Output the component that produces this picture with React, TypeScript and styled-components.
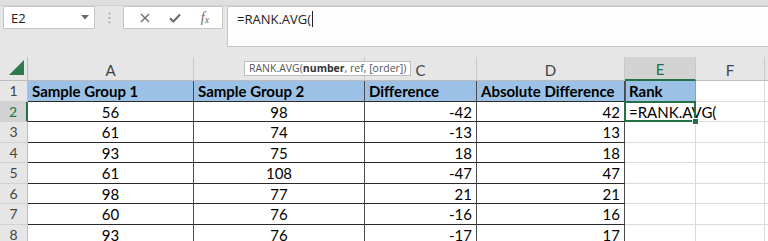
import { Fragment } from "react";
import styled, { createGlobalStyle } from "styled-components";

const GlobalStyle = createGlobalStyle`
  html, body {
    margin: 0;
    padding: 0;
  }
  body {
    background: #e6e6e6;
    font-family: Lato, "Liberation Sans", sans-serif;
    overflow: hidden;
  }
`;

const Window = styled.div`
  width: 768px;
  height: 241px;
  overflow: hidden;
  background: #e6e6e6;
`;

const FormulaBar = styled.div`
  display: flex;
  align-items: flex-start;
  height: 57px;
  box-sizing: border-box;
  padding: 6px 0 0 3px;
  background: linear-gradient(#dfdfdf 0, #dfdfdf 5px, #d2d2d2 5px, #d2d2d2 6px, #e6e6e6 6px);
  font-family: "Open Sans", "Noto Sans", sans-serif;
`;

const NameBox = styled.div`
  display: flex;
  align-items: center;
  justify-content: space-between;
  box-sizing: border-box;
  width: 92px;
  height: 23px;
  padding: 0 5px 0 7px;
  background: #fff;
  border: 1px solid #c6c6c6;
  font-size: 13px;
  color: #222;
`;

const Grip = styled.div`
  display: flex;
  align-items: center;
  justify-content: center;
  width: 28px;
  height: 23px;
`;

const FnBox = styled.div`
  display: flex;
  align-items: center;
  justify-content: space-around;
  box-sizing: border-box;
  width: 100px;
  height: 23px;
  padding: 0 2px 0 6px;
  background: #fff;
  border: 1px solid #c6c6c6;
`;

const FnButton = styled.span`
  display: flex;
  align-items: center;
  justify-content: center;
  width: 28px;
  height: 20px;
  color: #6b6b6b;
`;

const FxLabel = styled.span`
  font-family: "Liberation Serif", serif;
  font-style: italic;
  font-size: 14px;
  color: #6b6b6b;
  sub {
    font-size: 10px;
    vertical-align: -1px;
  }
`;

const FormulaInput = styled.div`
  flex: 1;
  display: flex;
  align-items: flex-start;
  box-sizing: border-box;
  height: 41px;
  margin-left: 4px;
  padding: 3px 9px;
  background: #fdfdfd;
  border: 1px solid #c6c6c6;
  border-right: none;
  font-size: 13px;
  color: #222;
  line-height: 18px;
`;

const Caret = styled.span`
  display: inline-block;
  width: 1px;
  height: 16px;
  margin: 1px 0 0 1px;
  background: #222;
`;

const Sheet = styled.div`
  position: relative;
  display: grid;
  grid-template-columns: 28px 166px 171px 112px 148px 71px 69px 1fr;
  grid-template-rows: 24px;
  grid-auto-rows: 20.5px;
  background: #fff;
`;

const Corner = styled.div`
  display: flex;
  align-items: flex-end;
  justify-content: flex-end;
  box-sizing: border-box;
  padding: 0 3px 5px 0;
  background: #e6e6e6;
  border-right: 1px solid #bdbdbd;
  border-bottom: 1px solid #bdbdbd;
`;

const ColHead = styled.div<{ $active?: boolean }>`
  display: flex;
  align-items: center;
  justify-content: center;
  box-sizing: border-box;
  padding-top: 2px;
  background: ${(p) => (p.$active ? "#d3d3d3" : "#e6e6e6")};
  border-right: 1px solid #c8c8c8;
  border-bottom: ${(p) => (p.$active ? "2px solid #217346" : "1px solid #bdbdbd")};
  color: ${(p) => (p.$active ? "#217346" : "#444")};
  font-size: 15px;
`;

const RowHead = styled.div<{ $active?: boolean }>`
  display: flex;
  align-items: center;
  justify-content: center;
  box-sizing: border-box;
  background: ${(p) => (p.$active ? "#d3d3d3" : "#e6e6e6")};
  border-right: ${(p) => (p.$active ? "2px solid #217346" : "1px solid #bdbdbd")};
  border-bottom: 1px solid #d0d0d0;
  color: ${(p) => (p.$active ? "#217346" : "#444")};
  font-size: 14px;
`;

const Cell = styled.div<{
  $table?: boolean;
  $fill?: boolean;
  $bold?: boolean;
  $align?: "left" | "center" | "right";
}>`
  box-sizing: border-box;
  padding: 0 4px;
  background: ${(p) => (p.$fill ? "#9bc2e6" : "#fff")};
  border-right: 1px solid ${(p) => (p.$table ? "#4a4a4a" : "#dadada")};
  border-bottom: 1px solid ${(p) => (p.$table ? "#2a2a2a" : "#dadada")};
  text-align: ${(p) => p.$align || "left"};
  font-size: 15px;
  font-weight: ${(p) => (p.$bold ? 700 : 400)};
  line-height: 20px;
  color: #000;
  white-space: nowrap;
`;

const HeaderE = styled(Cell)`
  box-shadow: inset 1px 0 0 #217346;
  border-right-color: #7fae93;
  border-bottom-color: #2f6f49;
`;

const ActiveCell = styled(Cell)`
  position: relative;
  overflow: visible;
  &::after {
    content: "";
    position: absolute;
    left: -1px;
    top: -1px;
    right: -1px;
    bottom: -1px;
    border: 2px solid #217346;
    pointer-events: none;
  }
`;

const Handle = styled.span`
  position: absolute;
  right: -4px;
  bottom: -4px;
  width: 5px;
  height: 5px;
  background: #217346;
  border: 1px solid #fff;
  z-index: 2;
`;

const Tooltip = styled.div`
  position: absolute;
  left: 244px;
  top: 4px;
  box-sizing: border-box;
  height: 15px;
  padding: 0 4px;
  background: #fff;
  border: 1px solid #bdbdbd;
  font-family: "Open Sans", "Noto Sans", sans-serif;
  font-size: 10.5px;
  line-height: 13px;
  color: #555;
  white-space: nowrap;
  b {
    color: #333;
    font-weight: 700;
  }
`;

const columns = ["A", "B", "C", "D", "E", "F", ""];

const rows: [number, number, number, number][] = [
  [56, 98, -42, 42],
  [61, 74, -13, 13],
  [93, 75, 18, 18],
  [61, 108, -47, 47],
  [98, 77, 21, 21],
  [60, 76, -16, 16],
  [93, 76, -17, 17],
];

const headers = ["Sample Group 1", "Sample Group 2", "Difference", "Absolute Difference"];

const App = () => {
  return (
    <Window>
      <GlobalStyle />
      <FormulaBar>
        <NameBox>
          <span>E2</span>
          <svg width="8" height="5" viewBox="0 0 8 5">
            <path d="M0 0 H8 L4 4.5 Z" fill="#6b6b6b" />
          </svg>
        </NameBox>
        <Grip>
          <svg width="3" height="12" viewBox="0 0 3 12">
            <circle cx="1.5" cy="1.5" r="1" fill="#a8a8a8" />
            <circle cx="1.5" cy="6" r="1" fill="#a8a8a8" />
            <circle cx="1.5" cy="10.5" r="1" fill="#a8a8a8" />
          </svg>
        </Grip>
        <FnBox>
          <FnButton>
            <svg width="10" height="10" viewBox="0 0 10 10">
              <path d="M1 1 L9 9 M9 1 L1 9" stroke="#6b6b6b" strokeWidth="1.4" />
            </svg>
          </FnButton>
          <FnButton>
            <svg width="12" height="10" viewBox="0 0 12 10">
              <path d="M1 5.2 L4.3 8.5 L11 1.5" stroke="#6b6b6b" strokeWidth="2" fill="none" />
            </svg>
          </FnButton>
          <FnButton>
            <FxLabel>
              f<sub>x</sub>
            </FxLabel>
          </FnButton>
        </FnBox>
        <FormulaInput>
          <span>=RANK.AVG(</span>
          <Caret />
        </FormulaInput>
      </FormulaBar>

      <Sheet>
        <Corner>
          <svg width="15" height="15" viewBox="0 0 15 15">
            <path d="M15 0 V15 H0 Z" fill="#2f7a4b" />
          </svg>
        </Corner>
        {columns.map((c) => (
          <ColHead key={c || "G"} $active={c === "E"}>
            {c}
          </ColHead>
        ))}

        <RowHead>1</RowHead>
        {headers.map((h) => (
          <Cell key={h} $table $fill $bold>
            {h}
          </Cell>
        ))}
        <HeaderE $fill $bold>
          Rank
        </HeaderE>
        <Cell />
        <Cell />

        {rows.map((r, i) => (
          <Fragment key={i}>
            <RowHead $active={i === 0}>{i + 2}</RowHead>
            <Cell $table $align="center">
              {r[0]}
            </Cell>
            <Cell $table $align="center">
              {r[1]}
            </Cell>
            <Cell $table $align="right">
              {r[2]}
            </Cell>
            <Cell $table $align="right">
              {r[3]}
            </Cell>
            {i === 0 ? (
              <ActiveCell>
                =RANK.AVG(
                <Handle />
              </ActiveCell>
            ) : (
              <Cell />
            )}
            <Cell />
            <Cell />
          </Fragment>
        ))}

        <Tooltip>
          RANK.AVG(<b>number</b>, ref, [order])
        </Tooltip>
      </Sheet>
    </Window>
  );
};

export default App;
